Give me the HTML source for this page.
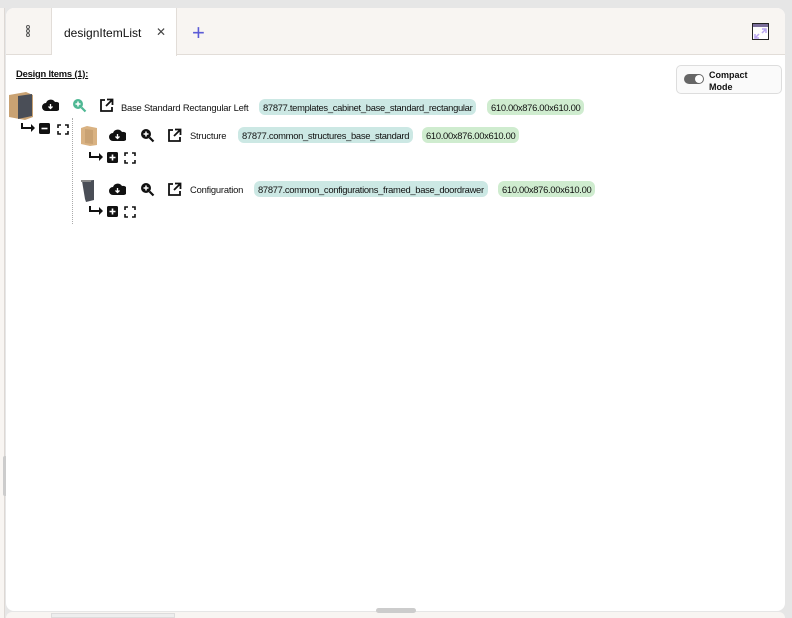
<!DOCTYPE html>
<html><head><style>
*{box-sizing:border-box;margin:0;padding:0}
body{width:792px;height:618px;background:#e6e6e6;font-family:"Liberation Sans",sans-serif;position:relative;overflow:hidden;color:#111}
.leftstrip{position:absolute;left:0;top:8px;width:5px;height:610px;background:#f8f5f2;border-right:1px solid #ddd8d4}
.panel{position:absolute;left:6px;top:8px;width:779px;height:603px;background:#fff;border-radius:8px 8px 8px 8px;overflow:hidden}
.tabbar{position:absolute;left:0;top:0;width:779px;height:47px;background:#f8f5f2;border-bottom:1px solid #e2ddd8}
.tab1{position:absolute;left:0;top:0;width:46px;height:47px;border-right:1px solid #e2ddd8}
.tab2{position:absolute;left:46px;top:0;width:125px;height:48px;background:#fff;border-right:1px solid #e2ddd8;font-size:12px;padding:18px 0 0 12px}
.plus{position:absolute;left:186px;top:12px;font-size:22px;color:#5b5bd6;font-weight:300}
.t{position:absolute;font-size:9.4px;white-space:nowrap;letter-spacing:-0.2px}
.chip{position:absolute;height:16px;border-radius:6px;font-size:9.4px;padding:3px 4px 0 4px;white-space:nowrap;letter-spacing:-0.3px}
.c1{background:#cce8e4}.c2{background:#cfeccf}
.ic{position:absolute}
.bottom{position:absolute;left:6px;top:612px;width:779px;height:6px;background:#f8f5f2;border-radius:6px 6px 0 0}
</style></head><body>
<div class="leftstrip"></div>
<div style="position:absolute;left:3px;top:456px;width:4px;height:40px;background:#ccc;border-radius:2px"></div>
<div class="panel">
<div class="tabbar">
 <div class="tab1"><div style="position:absolute;left:20px;top:17px;width:4px;height:12px;font-size:0">
  <div style="width:4px;height:4px;border:1px solid #555;border-radius:2px;margin-bottom:0"></div><div style="width:4px;height:4px;border:1px solid #555;border-radius:2px"></div><div style="width:4px;height:4px;border:1px solid #555;border-radius:2px"></div></div></div>
 <div class="tab2">designItemList<span style="position:absolute;left:104px;top:17px;font-size:12px;color:#444">✕</span></div>
 <div class="plus">+</div>
 <svg class="ic" style="left:746px;top:15px" width="17" height="17"><rect x="0.5" y="0.5" width="16" height="16" fill="#fff" stroke="#222"/><rect x="1" y="1" width="15" height="3" fill="#7a6d9a"/><path d="M10 6h4v4M14 6l-4 4M3 11v4h4M3 15l4-4" stroke="#b9a4f0" stroke-width="1.5" fill="none"/></svg>
</div>
<div class="t" style="left:10px;top:60px;font-weight:bold;text-decoration:underline">Design Items (1):</div>
<div style="position:absolute;left:670px;top:57px;width:106px;height:29px;border:1px solid #ddd;border-radius:5px;background:#fafafa">
 <div style="position:absolute;left:7px;top:8px;width:20px;height:10px;border-radius:5px;background:#666"><div style="position:absolute;right:1px;top:1px;width:8px;height:8px;border-radius:4px;background:#fff"></div></div>
 <div style="position:absolute;left:32px;top:3px;font-size:9px;font-weight:bold;line-height:12px">Compact<br>Mode</div>
</div>
<!-- row 1 -->
<svg class="ic" style="left:2px;top:83px" width="26" height="30"><path d="M1 4l17-3 7 3v22l-8 3-16-3z" fill="#c9a273"/><path d="M10 5l14-2v22l-14 3z" fill="#4a4e57"/></svg>
<svg class="ic" style="left:36px;top:91px" width="17" height="13"><path d="M4 12a4 4 0 010-8 5 5 0 019-1 4 4 0 012 9z" fill="#111"/><path d="M8.5 5v4M6.5 7.5l2 2 2-2" stroke="#fff" stroke-width="1.3" fill="none"/></svg>
<svg class="ic" style="left:66px;top:90px" width="15" height="15"><circle cx="6" cy="6" r="5" fill="#4fb894"/><path d="M6 3.5v5M3.5 6h5" stroke="#fff" stroke-width="1.5"/><path d="M9.5 9.5l4 4" stroke="#4fb894" stroke-width="2.2"/></svg>
<svg class="ic" style="left:93px;top:90px" width="15" height="15"><path d="M6 2H2v11h11V9" stroke="#111" stroke-width="1.8" fill="none"/><path d="M8 1.5h5.5V7M13.5 1.5L7 8" stroke="#111" stroke-width="1.8" fill="none"/></svg>
<div class="t" style="left:115px;top:94px">Base Standard Rectangular Left</div>
<div class="chip c1" style="left:253px;top:91px">87877.templates_cabinet_base_standard_rectangular</div>
<div class="chip c2" style="left:481px;top:91px">610.00x876.00x610.00</div>
<svg class="ic" style="left:14px;top:114px" width="42" height="14"><path d="M2 1v5h12" stroke="#111" stroke-width="2" fill="none"/><path d="M11 2l4 4-4 4z" fill="#111"/><rect x="19" y="1" width="11" height="11" rx="1.5" fill="#111"/><path d="M21.5 6.5h6" stroke="#fff" stroke-width="1.6"/></svg>
<svg class="ic" style="left:50px;top:115px" width="16" height="13"><path d="M2 5V2h3M2 8v3h3M9 2h3v3M9 11h3V8" stroke="#111" stroke-width="1.6" fill="none"/></svg>
<div style="position:absolute;left:66px;top:110px;height:106px;border-left:1px dotted #aaa"></div>
<!-- row 2 -->
<svg class="ic" style="left:74px;top:117px" width="18" height="22"><path d="M1 3l6-2 10 2v17l-7 1-9-2z" fill="#d9b282"/><path d="M5 4l8 1v14l-8-1z" fill="#c9a273"/></svg>
<svg class="ic" style="left:103px;top:121px" width="17" height="13"><path d="M4 12a4 4 0 010-8 5 5 0 019-1 4 4 0 012 9z" fill="#111"/><path d="M8.5 5v4M6.5 7.5l2 2 2-2" stroke="#fff" stroke-width="1.3" fill="none"/></svg>
<svg class="ic" style="left:134px;top:120px" width="15" height="15"><circle cx="6" cy="6" r="5" fill="#111"/><path d="M6 3.5v5M3.5 6h5" stroke="#fff" stroke-width="1.5"/><path d="M9.5 9.5l4 4" stroke="#111" stroke-width="2.2"/></svg>
<svg class="ic" style="left:161px;top:120px" width="15" height="15"><path d="M6 2H2v11h11V9" stroke="#111" stroke-width="1.8" fill="none"/><path d="M8 1.5h5.5V7M13.5 1.5L7 8" stroke="#111" stroke-width="1.8" fill="none"/></svg>
<div class="t" style="left:184px;top:122px">Structure</div>
<div class="chip c1" style="left:232px;top:119px">87877.common_structures_base_standard</div>
<div class="chip c2" style="left:416px;top:119px">610.00x876.00x610.00</div>
<svg class="ic" style="left:82px;top:143px" width="50" height="14"><path d="M2 1v5h12" stroke="#111" stroke-width="2" fill="none"/><path d="M11 2l4 4-4 4z" fill="#111"/><rect x="19" y="1" width="11" height="11" rx="1.5" fill="#111"/><path d="M21.5 6.5h6M24.5 3.5v6" stroke="#fff" stroke-width="1.6"/><path d="M37 5V2h3M37 9v3h3M44 2h3v3M44 12h3V9" stroke="#111" stroke-width="1.6" fill="none"/></svg>
<!-- row 3 -->
<svg class="ic" style="left:74px;top:171px" width="18" height="24"><path d="M2 2l12-1v20l-8 2-1-3z" fill="#4a4e57"/><path d="M1 1h10v2H1z" fill="#888"/></svg>
<svg class="ic" style="left:103px;top:175px" width="17" height="13"><path d="M4 12a4 4 0 010-8 5 5 0 019-1 4 4 0 012 9z" fill="#111"/><path d="M8.5 5v4M6.5 7.5l2 2 2-2" stroke="#fff" stroke-width="1.3" fill="none"/></svg>
<svg class="ic" style="left:134px;top:174px" width="15" height="15"><circle cx="6" cy="6" r="5" fill="#111"/><path d="M6 3.5v5M3.5 6h5" stroke="#fff" stroke-width="1.5"/><path d="M9.5 9.5l4 4" stroke="#111" stroke-width="2.2"/></svg>
<svg class="ic" style="left:161px;top:174px" width="15" height="15"><path d="M6 2H2v11h11V9" stroke="#111" stroke-width="1.8" fill="none"/><path d="M8 1.5h5.5V7M13.5 1.5L7 8" stroke="#111" stroke-width="1.8" fill="none"/></svg>
<div class="t" style="left:184px;top:176px">Configuration</div>
<div class="chip c1" style="left:248px;top:173px">87877.common_configurations_framed_base_doordrawer</div>
<div class="chip c2" style="left:492px;top:173px">610.00x876.00x610.00</div>
<svg class="ic" style="left:82px;top:197px" width="50" height="14"><path d="M2 1v5h12" stroke="#111" stroke-width="2" fill="none"/><path d="M11 2l4 4-4 4z" fill="#111"/><rect x="19" y="1" width="11" height="11" rx="1.5" fill="#111"/><path d="M21.5 6.5h6M24.5 3.5v6" stroke="#fff" stroke-width="1.6"/><path d="M37 5V2h3M37 9v3h3M44 2h3v3M44 12h3V9" stroke="#111" stroke-width="1.6" fill="none"/></svg>
</div>
<div class="bottom"><div style="position:absolute;left:45px;top:1px;width:124px;height:5px;background:#eee;border:1px solid #ddd"></div></div>
<div style="position:absolute;left:376px;top:608px;width:40px;height:5px;border-radius:3px;background:#ccc"></div>
</body></html>
